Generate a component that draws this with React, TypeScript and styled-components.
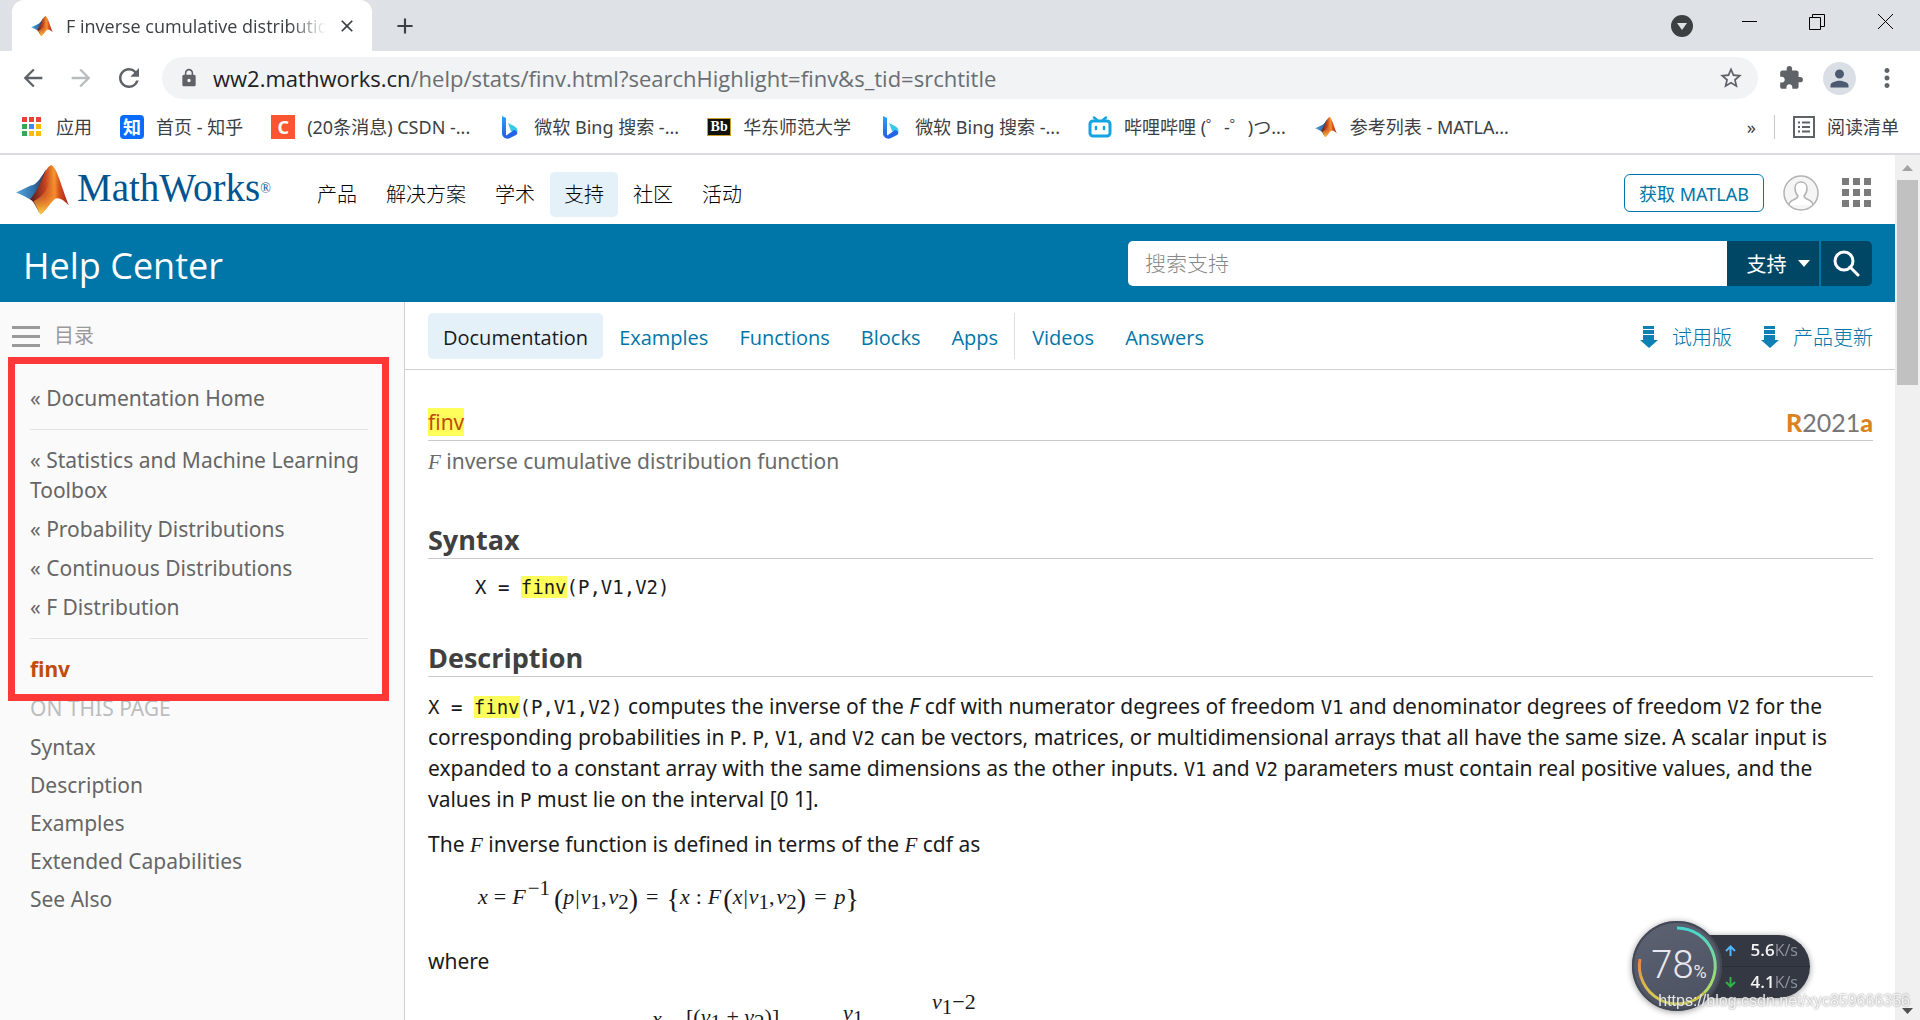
import React from "react";
import styled, { createGlobalStyle } from "styled-components";
import {
  MdArrowBack,
  MdArrowForward,
  MdRefresh,
  MdLock,
  MdStarBorder,
  MdExtension,
  MdPerson,
  MdMoreVert,
  MdClose,
  MdAdd,
} from "react-icons/md";

const sans = `"Noto Sans", "Noto Sans CJK SC", sans-serif`;
const compact = `"Open Sans", "Noto Sans CJK SC", sans-serif`;
const serif = `"Liberation Serif", "Times New Roman", serif`;
const mono = `"DejaVu Sans Mono", monospace`;

const color = {
  blue: "#0076a8",
  navy: "#004766",
  pale: "#e4f1f9",
  rust: "#c04c0b",
  mark: "#ffff5c",
  rule: "#cacaca",
};

const GlobalStyle = createGlobalStyle`
  * { box-sizing: border-box; }
  body { margin: 0; overflow: hidden; background: #fff; font-family: ${sans}; color: #1a1a1a; }
  button, input { font: inherit; color: inherit; border: 0; padding: 0; background: none; }
  a { color: inherit; text-decoration: none; }
  h1, h2, p, ul { margin: 0; padding: 0; }
  ul { list-style: none; }
  svg { display: block; flex: none; }
`;

const Window = styled.div`
  display: flex;
  flex-direction: column;
  height: 100vh;
  overflow: hidden;
`;

/* ---------- browser chrome ---------- */

const TabStrip = styled.div`
  display: flex;
  align-items: stretch;
  height: 51px;
  flex: none;
  padding-left: 12px;
  background: #dee1e6;
`;

const Tab = styled.div`
  display: flex;
  align-items: center;
  gap: 12px;
  width: 360px;
  padding: 0 16px 0 18px;
  border-radius: 12px 12px 0 0;
  background: #fff;
`;

const TabTitle = styled.span`
  flex: 1;
  overflow: hidden;
  white-space: nowrap;
  font-family: ${compact};
  font-size: 18px;
  color: #3c4043;
  mask-image: linear-gradient(90deg, #000 86%, transparent);
`;

const WindowControls = styled.div`
  display: flex;
  height: 43px;
`;

const IconButton = styled.button<{ $width: number; $tone?: string }>`
  display: flex;
  align-items: center;
  justify-content: center;
  flex: none;
  width: ${(p) => p.$width}px;
  color: ${(p) => p.$tone ?? "#5f6368"};
`;

const Spacer = styled.div`
  flex: 1;
`;

const Toolbar = styled.div`
  display: flex;
  align-items: center;
  height: 54px;
  flex: none;
  padding: 0 9px;
`;

const AddressBar = styled.div`
  display: flex;
  align-items: center;
  flex: 1;
  height: 42px;
  margin: 0 8px 0 9px;
  padding: 0 14px 0 17px;
  gap: 14px;
  border-radius: 21px;
  background: #f1f3f4;
  color: #5f6368;
`;

const Address = styled.span`
  flex: 1;
  font-family: ${compact};
  font-size: 22px;
  color: #6a6e72;
  b {
    font-weight: 400;
    color: #202124;
  }
`;

const ProfileDot = styled.span`
  display: grid;
  place-items: center;
  width: 33px;
  height: 33px;
  border-radius: 50%;
  background: #dadfe6;
  color: #4d5a70;
`;

const Bookmarks = styled.nav`
  display: flex;
  align-items: center;
  gap: 28px;
  height: 50px;
  flex: none;
  padding: 0 21px 4px 20px;
  border-bottom: 2px solid #dadce0;
  font-size: 18px;
  color: #3c4043;
  white-space: nowrap;
`;

const Bookmark = styled.a`
  display: flex;
  align-items: center;
  gap: 12px;
  line-height: 26px;
`;

const IconSlot = styled.span`
  display: grid;
  place-items: center;
  width: 24px;
  height: 24px;
`;

const Tile = styled.span<{ $bg: string; $radius: number }>`
  display: grid;
  place-items: center;
  width: 24px;
  height: 24px;
  border-radius: ${(p) => p.$radius}px;
  background: ${(p) => p.$bg};
  color: #fff;
  font-size: 18px;
  font-weight: 700;
  line-height: 24px;
`;

const BbTile = styled.span`
  width: 24px;
  height: 18px;
  border: 1px solid #c9a227;
  background: #111;
  color: #fff;
  font: 700 14px/16px ${serif};
  text-align: center;
`;

const BookmarkDivider = styled.span`
  width: 1px;
  height: 24px;
  margin: 0 -10px;
  background: #c4c8cc;
`;

/* ---------- page frame ---------- */

const Viewport = styled.div`
  display: flex;
  flex: 1;
  min-height: 0;
`;

const Page = styled.div`
  display: flex;
  flex-direction: column;
  flex: 1;
  min-width: 0;
`;

const ScrollTrack = styled.div`
  display: flex;
  flex-direction: column;
  justify-content: space-between;
  align-items: center;
  width: 25px;
  padding: 10px 2px 6px;
  background: #f0f0f0;
`;

const ScrollThumb = styled.div`
  width: 100%;
  height: 205px;
  margin: 9px 0 auto;
  background: #c1c1c1;
`;

const SiteHeader = styled.header`
  display: flex;
  align-items: center;
  height: 69px;
  flex: none;
  padding: 0 24px 0 16px;
`;

const Brand = styled.a`
  display: flex;
  align-items: center;
  gap: 8px;
  width: 287px;
  font: 39px/44px ${serif};
  color: #00548f;
  span {
    padding-bottom: 4px;
  }
  sup {
    font-size: 14px;
    line-height: 20px;
    vertical-align: 8px;
  }
`;

const SiteNav = styled.nav`
  display: flex;
  gap: 1px;
  padding-top: 10px;
`;

const SiteLink = styled.a<{ $active?: boolean }>`
  padding: 0 14px;
  border-radius: 5px;
  background: ${(p) => (p.$active ? color.pale : "transparent")};
  color: #000;
  font-size: 20px;
  font-weight: 300;
  line-height: 45px;
`;

const AccountArea = styled.div`
  display: flex;
  align-items: center;
  gap: 19px;
  margin-left: auto;
  padding-top: 6px;
`;

const GetButton = styled.button`
  height: 38px;
  padding: 0 14px;
  border: 1px solid ${color.blue};
  border-radius: 6px;
  color: ${color.blue};
  font-size: 18px;
`;

const AppGrid = styled.button`
  display: grid;
  grid-template-columns: repeat(3, 7px);
  gap: 4px;
  padding-left: 4px;
  span {
    height: 7px;
    background: #7b7b7b;
  }
`;

const HelpBar = styled.div`
  display: flex;
  align-items: center;
  justify-content: space-between;
  height: 78px;
  flex: none;
  padding: 0 23px;
  background: ${color.blue};
  color: #fff;
`;

const HelpTitle = styled.a`
  padding-top: 6px;
  font-family: ${compact};
  font-size: 36px;
  line-height: 48px;
`;

const SearchForm = styled.form`
  display: flex;
  width: 744px;
  height: 45px;
  border-radius: 5px;
  overflow: hidden;
`;

const SearchInput = styled.input`
  flex: 1;
  min-width: 0;
  padding: 0 17px;
  background: #fff;
  color: #333;
  font-size: 21px;
  font-weight: 300;
  outline: 0;
  &::placeholder {
    color: #888;
  }
`;

const SearchButton = styled.button<{ $width: number }>`
  display: flex;
  align-items: center;
  justify-content: center;
  gap: 11px;
  width: ${(p) => p.$width}px;
  background: ${color.navy};
  font-size: 20px;
  & + & {
    border-left: 1px solid ${color.blue};
  }
`;

const ScopeButton = styled(SearchButton)`
  padding-left: 10px;
  border-right: 1px solid ${color.blue};
`;

const Columns = styled.div`
  display: flex;
  flex: 1;
  min-height: 0;
`;

/* ---------- contents sidebar ---------- */

const Sidebar = styled.aside`
  position: relative;
  width: 405px;
  flex: none;
  border-right: 1px solid #cfcfcf;
  background: #fafafa;
  color: #666;
`;

const ContentsToggle = styled.button`
  display: flex;
  align-items: center;
  gap: 14px;
  margin: 16px 0 0 12px;
  color: #9a9a9a;
  font-size: 20px;
  line-height: 36px;
`;

const Burger = styled.span`
  display: grid;
  gap: 6px;
  width: 28px;
  i {
    height: 3px;
    background: #9a9a9a;
  }
`;

const LinkList = styled.ul<{ $gap: number }>`
  display: flex;
  flex-direction: column;
  gap: ${(p) => p.$gap}px;
  margin: 0 30px;
  font-size: 21px;
  line-height: 30px;
`;

const CrumbGroup = styled(LinkList)`
  margin-right: 36px;
  padding: 15px 0 16px;
  border-bottom: 1px solid #e3e3e3;
`;

const CurrentGroup = styled(LinkList)`
  padding: 15px 0 9px;
`;

const Crumbs = styled.div`
  padding-top: 14px;
`;

const PageTitleLink = styled.a`
  color: ${color.rust};
  font-weight: 700;
`;

const Faint = styled.span`
  color: #bdbdbd;
`;

const Highlight = styled.div`
  position: absolute;
  left: 8px;
  top: 55px;
  width: 381px;
  height: 344px;
  border: 7px solid #fc3838;
`;

/* ---------- article ---------- */

const Main = styled.main`
  display: flex;
  flex-direction: column;
  flex: 1;
  min-width: 0;
`;

const SubNav = styled.nav`
  display: flex;
  align-items: center;
  gap: 1px;
  height: 68px;
  flex: none;
  padding: 0 22px 0 23px;
  border-bottom: 1px solid #d0d0d0;
  color: ${color.blue};
  font-family: ${compact};
  font-size: 20px;
  line-height: 43px;
`;

const SubLink = styled.a<{ $active?: boolean }>`
  padding: 3px 15px 0;
  border-radius: 5px;
  color: ${(p) => (p.$active ? "#1a1a1a" : "inherit")};
  background: ${(p) => (p.$active ? color.pale : "transparent")};
`;

const SubDivider = styled.span`
  width: 1px;
  height: 46px;
  margin-right: 1px;
  background: #dedede;
`;

const Downloads = styled.div`
  display: flex;
  gap: 29px;
  margin-left: auto;
  padding-top: 3px;
  font-weight: 300;
`;

const DownloadLink = styled.a`
  display: flex;
  align-items: center;
  gap: 14px;
`;

const Article = styled.article`
  flex: 1;
  min-height: 0;
  overflow: hidden;
  padding: 34px 22px 0 23px;
  font-size: 21px;
  line-height: 31px;
`;

const TitleRow = styled.div`
  display: flex;
  align-items: center;
  justify-content: space-between;
  height: 37px;
  border-bottom: 1px solid ${color.rule};
`;

const Title = styled.h1`
  color: ${color.rust};
  font-size: 21px;
  font-weight: 400;
  line-height: 27px;
`;

const Mark = styled.mark`
  background: ${color.mark};
  color: inherit;
`;

const Release = styled.span`
  font: 400 25px/30px Lato, sans-serif;
  color: #77777a;
  b {
    font-weight: 900;
    color: #d98420;
  }
`;

const Purpose = styled.p`
  padding-top: 5px;
  color: #6a6a6a;
`;

const Heading = styled.h2`
  border-bottom: 1px solid ${color.rule};
  color: #404040;
  font-family: ${compact};
  font-size: 27px;
  font-weight: 700;
  line-height: 36px;
`;

const SyntaxHeading = styled(Heading)`
  margin-top: 45px;
`;

const DescriptionHeading = styled(Heading)`
  margin-top: 38px;
`;

const Code = styled.code`
  font-family: ${mono};
  font-size: 19px;
  line-height: 1px;
`;

const SyntaxLine = styled.div`
  margin: 12px 0 0 47px;
`;

const Paragraph = styled.p`
  margin-top: 14px;
`;

const Serif = styled.em`
  font-family: ${serif};
  line-height: 1px;
`;

const Equation = styled.div`
  margin: 22px 0 34px 50px;
  font: 22px/30px ${serif};
  white-space: nowrap;
`;

const Op = styled.span<{ $gap: number }>`
  margin: 0 ${(p) => p.$gap}px;
`;

const Shift = styled.span<{ $by: number; $size?: number }>`
  font-size: ${(p) => p.$size ?? 21}px;
  line-height: 1px;
  vertical-align: ${(p) => p.$by}px;
`;

const Density = styled.div`
  display: grid;
  grid-template-columns: 34px 157px 89px auto;
  align-items: start;
  margin: 10px 0 0 224px;
  font: 22px/28px ${serif};
  white-space: nowrap;
`;

const Term = styled.span<{ $drop: number }>`
  padding-top: ${(p) => p.$drop}px;
`;

/* ---------- floating layers ---------- */

const Meter = styled.div`
  position: fixed;
  right: 110px;
  bottom: 9px;
  display: flex;
  align-items: center;
  filter: drop-shadow(0 1px 3px rgba(0, 0, 0, 0.4));
`;

const Dial = styled.div`
  position: relative;
  z-index: 1;
  display: grid;
  place-items: center;
  width: 90px;
  height: 90px;
  padding: 4px 0 0 4px;
  border-radius: 50%;
  background: linear-gradient(160deg, #5d6373, #4b5060);
  color: #e8e8ee;
  font: 300 38px/38px Roboto, sans-serif;
  small {
    font-size: 18px;
    font-weight: 400;
  }
  svg {
    position: absolute;
    inset: 0;
  }
`;

const Rates = styled.div`
  display: grid;
  width: 104px;
  height: 63px;
  margin-left: -16px;
  border-radius: 0 32px 32px 0;
  background: #343842;
  overflow: hidden;
`;

const Rate = styled.div`
  display: flex;
  align-items: center;
  justify-content: space-between;
  padding: 0 12px 0 19px;
  color: #f4f4f4;
  font: 600 17px/30px "Open Sans", sans-serif;
  & + & {
    border-top: 1px solid #2b2e37;
  }
  small {
    font: 400 16px "Open Sans", sans-serif;
    color: #8f929c;
  }
`;

const Watermark = styled.div`
  position: fixed;
  right: 10px;
  bottom: 8px;
  color: rgba(255, 255, 255, 0.85);
  font: 16px/22px "Liberation Sans", sans-serif;
  text-shadow: 0 0 2px rgba(90, 90, 90, 0.8);
`;

/* ---------- drawings ---------- */

const MatlabMark = ({ size, id }: { size: number; id: string }) => (
  <svg width={size} height={Math.round(size * 0.92)} viewBox="0 0 54 50" aria-hidden="true">
    <defs>
      <linearGradient id={`${id}a`} x1="0" y1="0" x2="1" y2="0">
        <stop offset="0" stopColor="#5aa9dd" />
        <stop offset="0.6" stopColor="#2d6ea8" />
        <stop offset="1" stopColor="#3b2435" />
      </linearGradient>
      <linearGradient id={`${id}b`} x1="0" y1="0" x2="1" y2="0">
        <stop offset="0" stopColor="#4c1d22" />
        <stop offset="0.4" stopColor="#c5421f" />
        <stop offset="0.62" stopColor="#f59a2e" />
        <stop offset="0.75" stopColor="#d9501f" />
        <stop offset="1" stopColor="#9e1f1c" />
      </linearGradient>
      <linearGradient id={`${id}c`} x1="0" y1="0" x2="0" y2="1">
        <stop offset="0" stopColor="#e8702a" stopOpacity="0" />
        <stop offset="0.6" stopColor="#ee7a2c" stopOpacity="0.5" />
        <stop offset="1" stopColor="#ffd23f" />
      </linearGradient>
    </defs>
    <path d="M0 28 L15 21 C22 20 27 10 31 4 L25 25 L14 35 C9 32 5 30 0 28Z" fill={`url(#${id}a)`} />
    <path d="M36 0 C30 2 28 14 22 24 C19 29 17 32 14 35 C19 37 21 46 25 50 C32 46 37 34 42 34 C47 34 50 38 54 41 C48 28 42 2 36 0Z" fill={`url(#${id}b)`} />
    <path d="M36 2 C38 14 32 30 18 37 C21 42 23 49 25 50 C31 47 35 37 39 35 C41 22 38 8 36 2Z" fill={`url(#${id}c)`} />
  </svg>
);

const dotColors = ["#ea4335", "#ea4335", "#ea4335", "#34a853", "#4285f4", "#fbbc04", "#34a853", "#fbbc04", "#fbbc04"];

const AppsIcon = () => (
  <svg width="20" height="20" viewBox="0 0 20 20" aria-hidden="true">
    {dotColors.map((fill, i) => (
      <rect key={i} x={(i % 3) * 7} y={Math.floor(i / 3) * 7} width="5" height="5" fill={fill} />
    ))}
  </svg>
);

const BingIcon = ({ id }: { id: string }) => (
  <svg width="16" height="23" viewBox="0 0 16 23" aria-hidden="true">
    <defs>
      <linearGradient id={id} x1="0" y1="0" x2="0" y2="1">
        <stop offset="0" stopColor="#2aa3f5" />
        <stop offset="1" stopColor="#2b5fe3" />
      </linearGradient>
    </defs>
    <path d="M0 0 L4 2 V20 C3 21 0 20 0 17Z" fill={`url(#${id})`} />
    <path d="M6 7 L12 10 C17 13 16 18 13 17 L9 15Z" fill="#35c8ea" />
    <path d="M0 17 C1 20 3 20 5 19 L12 14 C16 15 16 18 14 19 L8 22 C4 24 0 21 0 17Z" fill="#2563e8" />
  </svg>
);

const BiliIcon = () => (
  <svg width="24" height="22" viewBox="0 0 24 22" fill="none" stroke="#13a5e0" strokeWidth="3" strokeLinecap="round" aria-hidden="true">
    <rect x="2" y="5" width="20" height="15" rx="3" />
    <path d="M6 1.500 L9 4 M18 1.500 L15 4 M8 11v2 M16 11v2" strokeWidth="2.500" />
  </svg>
);

const ReadingIcon = () => (
  <svg width="22" height="22" viewBox="0 0 22 22" fill="none" stroke="#5f6368" strokeWidth="2" aria-hidden="true">
    <rect x="1" y="1" width="20" height="20" />
    <path d="M5 6.500h2M9 6.500h8M5 11h2M9 11h8M5 15.500h2M9 15.500h8" />
  </svg>
);

const DownloadIcon = () => (
  <svg width="18" height="22" viewBox="0 0 18 22" fill="#0f80b3" aria-hidden="true">
    <path d="M3 0h11v3H3zM3 4h11v4H3zM3 9h11v5h4l-9 8-9-8h3z" />
  </svg>
);

const UserIcon = () => (
  <svg width="36" height="36" viewBox="0 0 36 36" fill="none" stroke="#b3b3b3" strokeWidth="1.500" aria-hidden="true">
    <circle cx="18" cy="18" r="17" fill="#f5f5f5" />
    <path d="M6 30 C6 24 15 25 15 21 C12 18 12 15 12 13 C12 5 24 5 24 13 C24 15 24 18 21 21 C21 25 30 24 30 30" fill="#fff" />
  </svg>
);

const crumbs = [
  "Statistics and Machine Learning Toolbox",
  "Probability Distributions",
  "Continuous Distributions",
  "F Distribution",
];
const sections = ["Syntax", "Description", "Examples", "Extended Capabilities", "See Also"];
const siteLinks = ["产品", "解决方案", "学术", "支持", "社区", "活动"];

const Nu = ({ n }: { n: number }) => (
  <>
    <i>ν</i>
    <Shift $by={-5}>{n}</Shift>
  </>
);

const Args = ({ first }: { first: string }) => (
  <>
    <Shift $by={-4} $size={28}>(</Shift>
    <i>{first}</i>
    <Op $gap={1}>|</Op>
    <Nu n={1} /><span>,</span><Op $gap={1} /><Nu n={2} />
    <Shift $by={-4} $size={28}>)</Shift>
  </>
);

const BrowserChrome = () => (
  <>
    <TabStrip>
      <Tab>
        <IconSlot><MatlabMark size={22} id="tab" /></IconSlot>
        <TabTitle>F inverse cumulative distribution function</TabTitle>
        <IconButton $width={18} $tone="#3c4043" aria-label="Close tab"><MdClose size={20} /></IconButton>
      </Tab>
      <IconButton $width={66} $tone="#3c4043" aria-label="New tab"><MdAdd size={26} /></IconButton>
      <Spacer />
      <IconButton $width={66} aria-label="Search tabs">
        <svg width="22" height="22" viewBox="0 0 22 22"><circle cx="11" cy="11" r="11" fill="#3c4043" /><path d="M6 8h10l-5 7z" fill="#dee1e6" /></svg>
      </IconButton>
      <WindowControls>
        <IconButton $width={68} aria-label="Minimize"><svg width="15" height="15" stroke="#000"><path d="M0 7.500h15" /></svg></IconButton>
        <IconButton $width={68} aria-label="Restore"><svg width="16" height="16" fill="none" stroke="#000"><path d="M.5 3.500h11v12h-11zM3.500 3.500v-3h12v12h-4" /></svg></IconButton>
        <IconButton $width={69} aria-label="Close"><svg width="15" height="15" stroke="#000"><path d="M0 0l15 15M15 0L0 15" /></svg></IconButton>
      </WindowControls>
    </TabStrip>
    <Toolbar>
      <IconButton $width={48} aria-label="Back"><MdArrowBack size={28} /></IconButton>
      <IconButton $width={48} $tone="#b9bbbd" aria-label="Forward"><MdArrowForward size={28} /></IconButton>
      <IconButton $width={48} aria-label="Reload"><MdRefresh size={30} /></IconButton>
      <AddressBar>
        <MdLock size={20} />
        <Address><b>ww2.mathworks.cn</b>/help/stats/finv.html?searchHighlight=finv&amp;s_tid=srchtitle</Address>
        <MdStarBorder size={26} />
      </AddressBar>
      <IconButton $width={49} aria-label="Extensions"><MdExtension size={26} /></IconButton>
      <IconButton $width={48} aria-label="Profile"><ProfileDot><MdPerson size={27} /></ProfileDot></IconButton>
      <IconButton $width={48} aria-label="Menu"><MdMoreVert size={30} /></IconButton>
    </Toolbar>
    <Bookmarks>
      <Bookmark href="#"><IconSlot><AppsIcon /></IconSlot>应用</Bookmark>
      <Bookmark href="#"><Tile $bg="#0a6cff" $radius={4}>知</Tile>首页 - 知乎</Bookmark>
      <Bookmark href="#"><Tile $bg="#fc5531" $radius={0}>C</Tile>(20条消息) CSDN -...</Bookmark>
      <Bookmark href="#"><IconSlot><BingIcon id="bing1" /></IconSlot>微软 Bing 搜索 -...</Bookmark>
      <Bookmark href="#"><BbTile>Bb</BbTile>华东师范大学</Bookmark>
      <Bookmark href="#"><IconSlot><BingIcon id="bing2" /></IconSlot>微软 Bing 搜索 -...</Bookmark>
      <Bookmark href="#"><BiliIcon />哔哩哔哩 (゜-゜)つ...</Bookmark>
      <Bookmark href="#"><IconSlot><MatlabMark size={22} id="bm" /></IconSlot>参考列表 - MATLA...</Bookmark>
      <Spacer />
      <span>»</span>
      <BookmarkDivider />
      <Bookmark href="#"><ReadingIcon />阅读清单</Bookmark>
    </Bookmarks>
  </>
);

export default function App() {
  return (
    <Window>
      <GlobalStyle />
      <BrowserChrome />
      <Viewport>
        <Page>
          <SiteHeader>
            <Brand href="#">
              <MatlabMark size={53} id="brand" />
              <span>MathWorks<sup>®</sup></span>
            </Brand>
            <SiteNav>
              {siteLinks.map((label) => (
                <SiteLink key={label} href="#" $active={label === "支持"}>{label}</SiteLink>
              ))}
            </SiteNav>
            <AccountArea>
              <GetButton>获取 MATLAB</GetButton>
              <UserIcon />
              <AppGrid aria-label="Apps">
                {dotColors.map((_, i) => <span key={i} />)}
              </AppGrid>
            </AccountArea>
          </SiteHeader>
          <HelpBar>
            <HelpTitle href="#">Help Center</HelpTitle>
            <SearchForm>
              <SearchInput aria-label="搜索支持" placeholder="搜索支持" />
              <ScopeButton type="button" $width={93}>
                支持
                <svg width="12" height="7" fill="#fff"><path d="M0 0h12l-6 7z" /></svg>
              </ScopeButton>
              <SearchButton type="button" $width={52} aria-label="Search">
                <svg width="27" height="27" viewBox="0 0 27 27" fill="none" stroke="#fff" strokeWidth="3"><circle cx="11" cy="11" r="9" /><path d="M17 17l8 8" strokeLinecap="round" /></svg>
              </SearchButton>
            </SearchForm>
          </HelpBar>
          <Columns>
            <Sidebar>
              <ContentsToggle><Burger><i /><i /><i /></Burger>目录</ContentsToggle>
              <Crumbs>
                <CrumbGroup $gap={9}>
                  <li><a href="#">« Documentation Home</a></li>
                </CrumbGroup>
                <CrumbGroup $gap={9}>
                  {crumbs.map((label) => <li key={label}><a href="#">{`« ${label}`}</a></li>)}
                </CrumbGroup>
                <CurrentGroup $gap={9}>
                  <li><PageTitleLink href="#">finv</PageTitleLink></li>
                  <li><Faint>ON THIS PAGE</Faint></li>
                </CurrentGroup>
                <LinkList $gap={8}>
                  {sections.map((label) => <li key={label}><a href="#">{label}</a></li>)}
                </LinkList>
              </Crumbs>
              <Highlight />
            </Sidebar>
            <Main>
              <SubNav>
                <SubLink href="#" $active>Documentation</SubLink>
                <SubLink href="#">Examples</SubLink>
                <SubLink href="#">Functions</SubLink>
                <SubLink href="#">Blocks</SubLink>
                <SubLink href="#">Apps</SubLink>
                <SubDivider />
                <SubLink href="#">Videos</SubLink>
                <SubLink href="#">Answers</SubLink>
                <Downloads>
                  <DownloadLink href="#"><DownloadIcon />试用版</DownloadLink>
                  <DownloadLink href="#"><DownloadIcon />产品更新</DownloadLink>
                </Downloads>
              </SubNav>
              <Article>
                <TitleRow>
                  <Title><Mark>finv</Mark></Title>
                  <Release><b>R</b>2021<b>a</b></Release>
                </TitleRow>
                <Purpose><Serif>F</Serif> inverse cumulative distribution function</Purpose>
                <SyntaxHeading>Syntax</SyntaxHeading>
                <SyntaxLine><Code>X = <Mark>finv</Mark>(P,V1,V2)</Code></SyntaxLine>
                <DescriptionHeading>Description</DescriptionHeading>
                <Paragraph>
                  <Code>X = <Mark>finv</Mark>(P,V1,V2)</Code> computes the inverse of the <em>F</em> cdf with numerator degrees of freedom <Code>V1</Code> and denominator degrees of freedom <Code>V2</Code> for the corresponding probabilities in <Code>P</Code>. <Code>P</Code>, <Code>V1</Code>, and <Code>V2</Code> can be vectors, matrices, or multidimensional arrays that all have the same size. A scalar input is expanded to a constant array with the same dimensions as the other inputs. <Code>V1</Code> and <Code>V2</Code> parameters must contain real positive values, and the values in <Code>P</Code> must lie on the interval [0 1].
                </Paragraph>
                <Paragraph>The <Serif>F</Serif> inverse function is defined in terms of the <Serif>F</Serif> cdf as</Paragraph>
                <Equation>
                  <i>x</i><Op $gap={6}>=</Op><i>F</i><Op $gap={1} /><Shift $by={9}>−1</Shift><Op $gap={2} />
                  <Args first="p" /><Op $gap={8}>=</Op>
                  <Shift $by={-4} $size={28}>{"{"}</Shift><i>x</i><Op $gap={6}>:</Op><i>F</i><Op $gap={1} />
                  <Args first="x" /><Op $gap={8}>=</Op><i>p</i>
                  <Shift $by={-4} $size={28}>{"}"}</Shift>
                </Equation>
                <p>where</p>
                <Density>
                  <Term $drop={18}><i>x</i></Term>
                  <Term $drop={16}>[(<Nu n={1} /> + <Nu n={2} />)]</Term>
                  <Term $drop={12}><Nu n={1} /></Term>
                  <Term $drop={1}><Nu n={1} />−2</Term>
                </Density>
              </Article>
            </Main>
          </Columns>
        </Page>
        <ScrollTrack>
          <svg width="11" height="6" fill="#a3a3a3"><path d="M0 6h11L5.500 0z" /></svg>
          <ScrollThumb />
          <svg width="11" height="6" fill="#505050"><path d="M0 0h11L5.500 6z" /></svg>
        </ScrollTrack>
      </Viewport>
      <Meter>
        <Dial>
          <svg width="90" height="90" viewBox="0 0 90 90" fill="none" strokeWidth="3" aria-hidden="true">
            <defs>
              <linearGradient id="dialRight" x1="0" y1="0" x2="0" y2="1"><stop offset="0" stopColor="#45d6d0" /><stop offset="1" stopColor="#b5dc5c" /></linearGradient>
              <linearGradient id="dialLeft" x1="0" y1="1" x2="0" y2="0"><stop offset="0" stopColor="#d6d84c" /><stop offset="1" stopColor="#e8854a" /></linearGradient>
            </defs>
            <circle cx="45" cy="45" r="44" stroke="#444956" strokeWidth="2" />
            <path d="M45 7A38 38 0 0 1 72 72" stroke="url(#dialRight)" />
            <path d="M72 72A38 38 0 0 1 8 38" stroke="url(#dialLeft)" />
          </svg>
          <span>78<small>%</small></span>
        </Dial>
        <Rates>
          <Rate>
            <svg width="11" height="11" fill="none" stroke="#4db8ff" strokeWidth="2"><path d="M5.500 11V2M1 6l4.500-4.500L10 6" /></svg>
            <span>5.6<small>K/s</small></span>
          </Rate>
          <Rate>
            <svg width="11" height="11" fill="none" stroke="#2fb344" strokeWidth="2"><path d="M5.500 0v9M1 5l4.500 4.500L10 5" /></svg>
            <span>4.1<small>K/s</small></span>
          </Rate>
        </Rates>
      </Meter>
      <Watermark>https://blog.csdn.net/xyc859666356</Watermark>
    </Window>
  );
}
